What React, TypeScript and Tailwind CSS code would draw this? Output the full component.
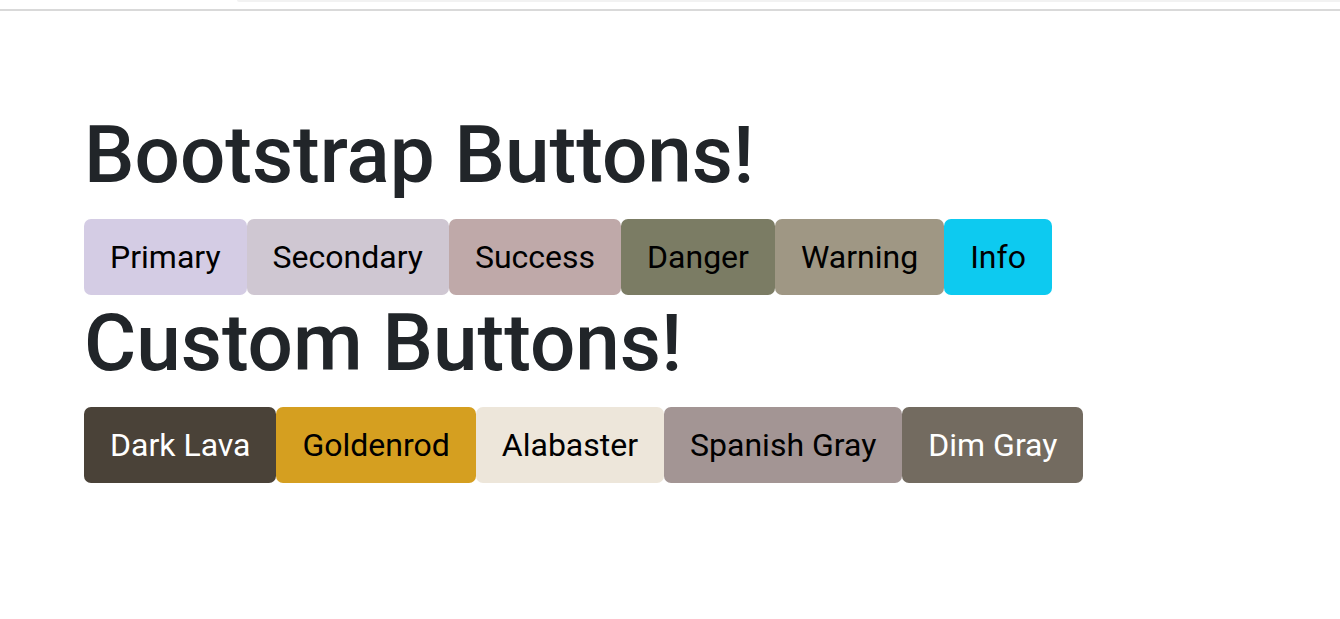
import React from 'react'

const BOOTSTRAP = [
  { label: 'Primary', bg: 'bg-[#d4cce4]', fg: 'text-black' },
  { label: 'Secondary', bg: 'bg-[#cfc7d2]', fg: 'text-black' },
  { label: 'Success', bg: 'bg-[#bfa9a9]', fg: 'text-black' },
  { label: 'Danger', bg: 'bg-[#7b7c64]', fg: 'text-black' },
  { label: 'Warning', bg: 'bg-[#9f9784]', fg: 'text-black' },
  { label: 'Info', bg: 'bg-[#0dcaf0]', fg: 'text-black' },
]

const CUSTOM = [
  { label: 'Dark Lava', bg: 'bg-[#4a4238]', fg: 'text-white' },
  { label: 'Goldenrod', bg: 'bg-[#d59f20]', fg: 'text-black' },
  { label: 'Alabaster', bg: 'bg-[#ede6da]', fg: 'text-black' },
  { label: 'Spanish Gray', bg: 'bg-[#a39594]', fg: 'text-black' },
  { label: 'Dim Gray', bg: 'bg-[#736b60]', fg: 'text-white' },
]

type Btn = { label: string; bg: string; fg: string }

function ButtonRow({ items }: { items: Btn[] }) {
  return (
    <div className="flex">
      {items.map((b) => (
        <button
          key={b.label}
          className={`h-[76px] rounded-[7px] px-[26px] text-[32px] leading-[48px] ${b.bg} ${b.fg}`}
        >
          {b.label}
        </button>
      ))}
    </div>
  )
}

export default function App() {
  return (
    <div className="min-h-[619px] bg-white font-['Roboto',sans-serif] text-[#212529]">
      <div className="relative h-[11px] border-b-2 border-[#d9d9d9]">
        <div className="ml-[237px] h-[2px] rounded-bl-[6px] bg-[#f2f2f2]" />
      </div>

      <div className="pl-[84px] pt-[96px]">
        <h1 className="mb-4 text-[80px] font-medium leading-[96px]">Bootstrap Buttons!</h1>
        <ButtonRow items={BOOTSTRAP} />
        <h1 className="mb-4 text-[80px] font-medium leading-[96px]">Custom Buttons!</h1>
        <ButtonRow items={CUSTOM} />
      </div>
    </div>
  )
}
